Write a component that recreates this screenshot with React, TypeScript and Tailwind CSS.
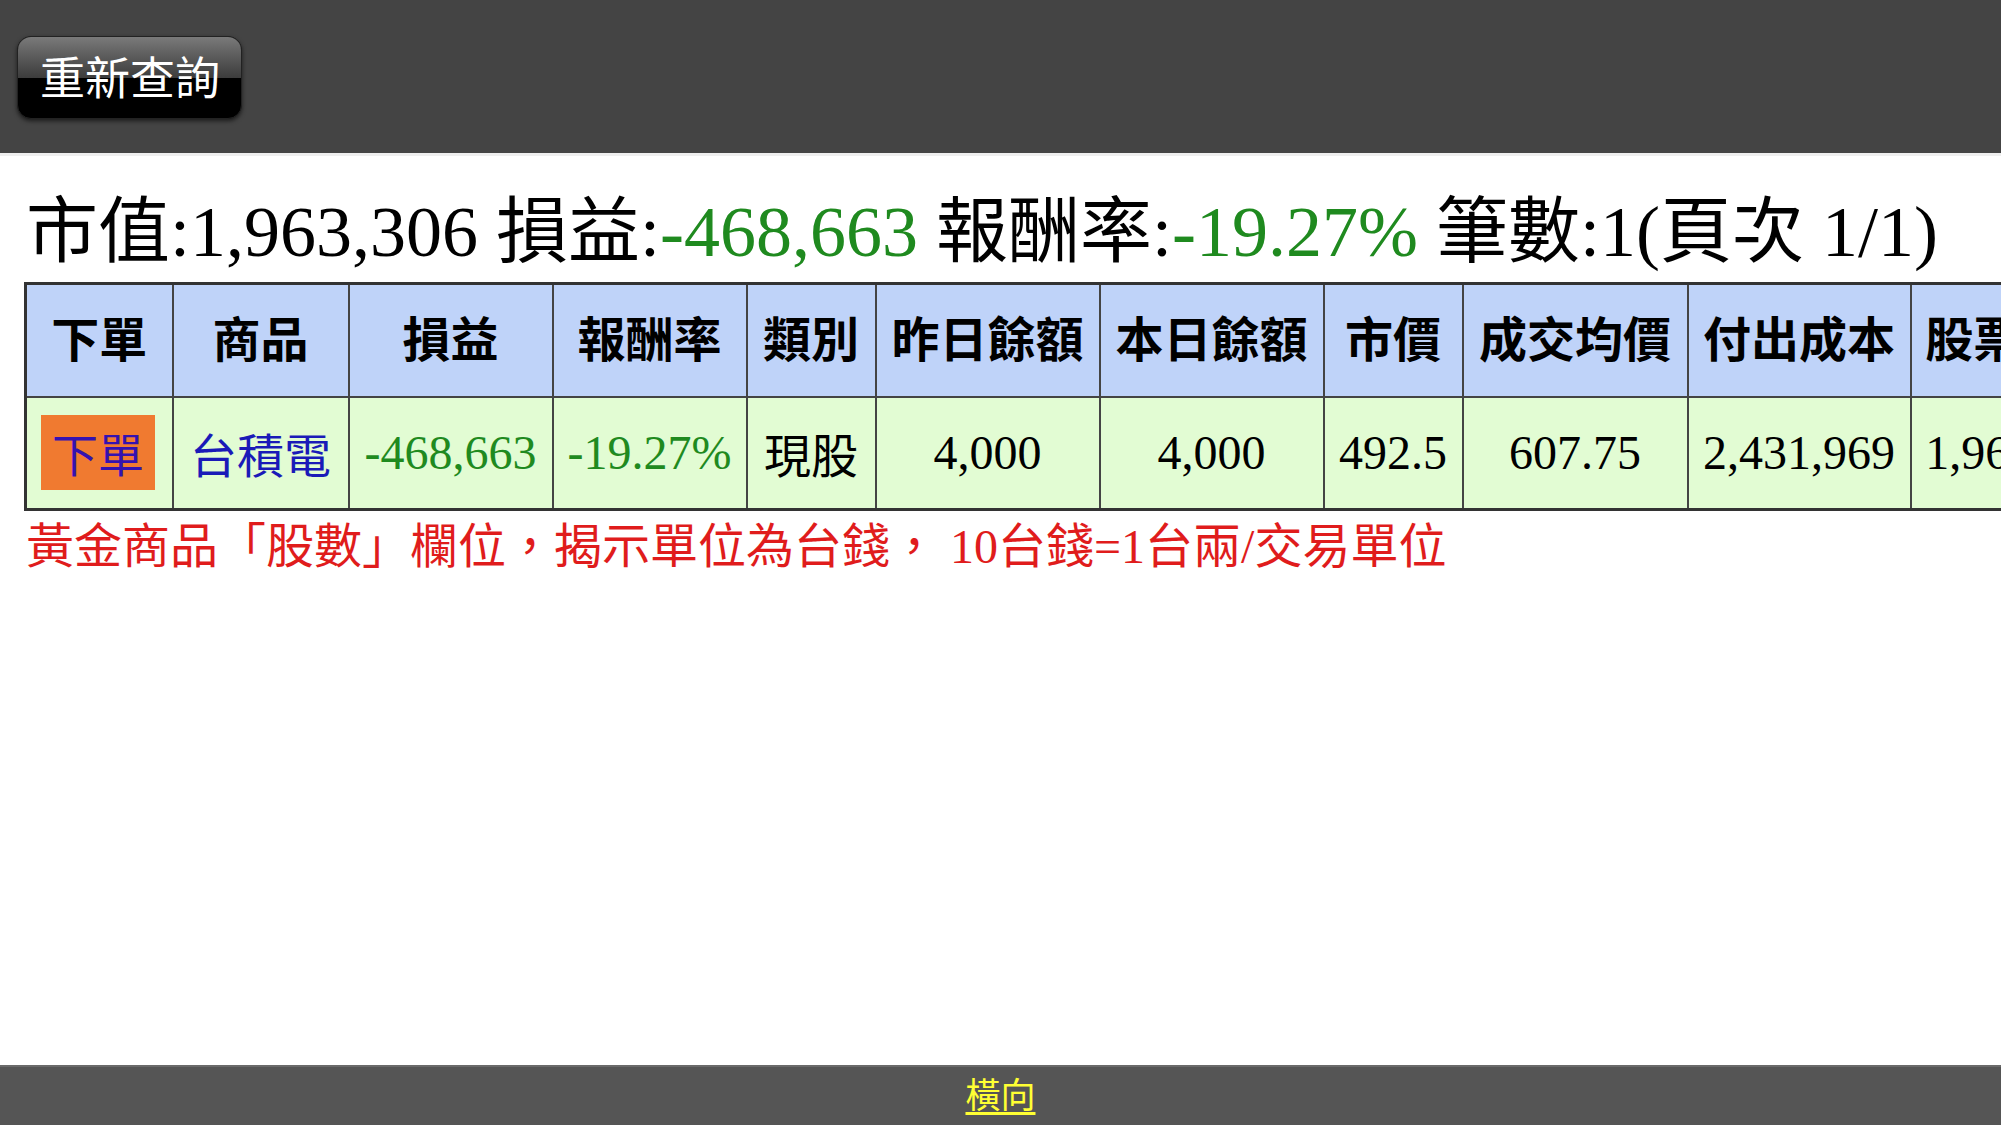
import React from "react";

const cols = [147, 176, 204, 194, 129, 224, 224, 139, 225, 223, 222];

const headers = ["下單", "商品", "損益", "報酬率", "類別", "昨日餘額", "本日餘額", "市價", "成交均價", "付出成本", "股票市值"];

export default function App() {
  return (
    <div className="flex h-screen w-full flex-col overflow-hidden bg-white font-['Liberation_Serif','Noto_Sans_CJK_TC',serif]">
      {/* top bar */}
      <div className="flex h-[156px] shrink-0 items-start border-b-[3px] border-[#eeeeee] bg-[#444444] pl-[17px] pt-[36px]">
        <button className="relative flex h-[83px] w-[225px] items-center overflow-hidden rounded-[14px] border border-[#222] bg-black pl-[22px] shadow-[0_2px_4px_rgba(0,0,0,0.6)]">
          <span className="absolute inset-x-0 top-0 h-1/2 bg-gradient-to-b from-[#7a7a7a] to-[#3c3c3c]" />
          <span className="relative -mt-[4px] font-['Noto_Sans_CJK_TC',sans-serif] text-[45px] leading-none text-white">重新查詢</span>
        </button>
      </div>

      {/* summary */}
      <div className="mt-[36px] whitespace-nowrap pl-[26px] text-[72px] leading-[80px] text-black">
        市值:1,963,306 損益:<span className="text-[#1f8a1f]">-468,663</span> 報酬率:<span className="text-[#1f8a1f]">-19.27%</span> 筆數:1(頁次 1/1)
      </div>

      {/* table */}
      <div className="mt-[10px] overflow-hidden pl-[24px]">
        <table className="table-fixed border-collapse border-[3px] border-[#333]" style={{ width: cols.reduce((a, b) => a + b, 0) }}>
          <colgroup>
            {cols.map((w, i) => (
              <col key={i} style={{ width: w }} />
            ))}
          </colgroup>
          <thead>
            <tr className="h-[113px] bg-[#bfd3f9]">
              {headers.map((h) => (
                <th key={h} className="whitespace-nowrap border-2 border-[#444] px-0 pb-[8px] text-center font-['Noto_Sans_CJK_TC',sans-serif] text-[48px] font-bold text-black">
                  {h}
                </th>
              ))}
            </tr>
          </thead>
          <tbody>
            <tr className="h-[113px] bg-[#e2fcd3] text-[48px] text-black">
              <td className="border-2 border-[#444] px-[14px]">
                <div className="flex h-[75px] w-[114px] items-center justify-center bg-[#f07a30] font-['Noto_Sans_CJK_TC',sans-serif] text-[46px] text-[#3412b0]">
                  下單
                </div>
              </td>
              <td className="border-2 border-[#444] text-center font-['Noto_Sans_CJK_TC',sans-serif] text-[47px] text-[#1a1ab8]">台積電</td>
              <td className="border-2 border-[#444] text-center text-[#1f8a1f]">-468,663</td>
              <td className="border-2 border-[#444] text-center text-[#1f8a1f]">-19.27%</td>
              <td className="border-2 border-[#444] text-center font-['Noto_Sans_CJK_TC',sans-serif] text-[47px]">現股</td>
              <td className="border-2 border-[#444] text-center">4,000</td>
              <td className="border-2 border-[#444] text-center">4,000</td>
              <td className="border-2 border-[#444] text-center">492.5</td>
              <td className="border-2 border-[#444] text-center">607.75</td>
              <td className="border-2 border-[#444] text-center">2,431,969</td>
              <td className="whitespace-nowrap border-2 border-[#444] text-center">1,963,306</td>
            </tr>
          </tbody>
        </table>
      </div>

      {/* note */}
      <div className="mt-[6px] whitespace-nowrap pl-[26px] text-[48px] leading-[60px] text-[#e01c1c]">
        黃金商品「股數」欄位，揭示單位為台錢， 10台錢=1台兩/交易單位
      </div>

      {/* bottom bar */}
      <div className="mt-auto flex h-[60px] shrink-0 items-center justify-center border-t-2 border-[#6a6a6a] bg-[#555555] pb-[8px]">
        <a className="font-['Noto_Sans_CJK_TC',sans-serif] text-[35px] leading-none text-[#ffff33] underline underline-offset-[4px]" href="#">
          橫向
        </a>
      </div>
    </div>
  );
}
